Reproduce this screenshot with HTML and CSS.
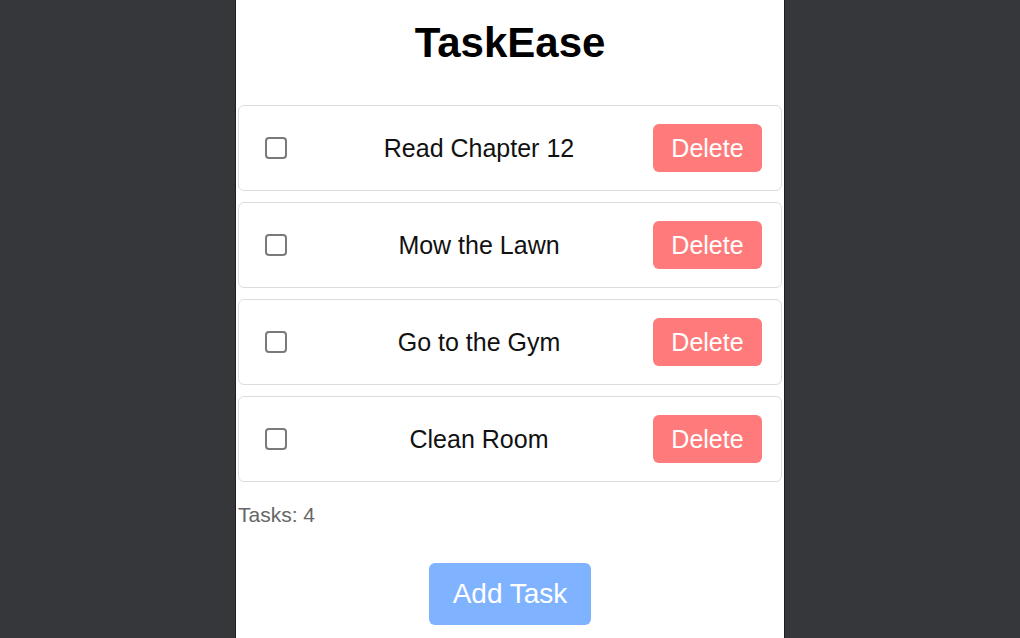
FILE: index.html
```html
<!DOCTYPE html>
<html lang="en">
  <head>
    <meta charset="UTF-8" />
    <meta name="viewport" content="width=device-width, initial-scale=1.0" />
    <title>TaskEase</title>
    <link rel="stylesheet" href="styles.css">
  </head>
  <body>
    <div class="app">
      <h1>TaskEase</h1>

      <ul class="task-list">
        <li class="task">
          <input type="checkbox" class="task-check" />
          <span class="task-name">Read Chapter 12</span>
          <button class="delete-btn">Delete</button>
        </li>
        <li class="task">
          <input type="checkbox" class="task-check" />
          <span class="task-name">Mow the Lawn</span>
          <button class="delete-btn">Delete</button>
        </li>
        <li class="task">
          <input type="checkbox" class="task-check" />
          <span class="task-name">Go to the Gym</span>
          <button class="delete-btn">Delete</button>
        </li>
        <li class="task">
          <input type="checkbox" class="task-check" />
          <span class="task-name">Clean Room</span>
          <button class="delete-btn">Delete</button>
        </li>
      </ul>

      <p class="task-count">Tasks: 4</p>

      <button class="add-btn">Add Task</button>
    </div>
  </body>
</html>
```

FILE: styles.css
```css
html,
body {
  height: 100%;
}
body {
  margin: 0;
  background-color: #36373b;
  font-family: "Liberation Sans", Arial, sans-serif;
  color: #111;
  overflow: hidden;
}
.app {
  width: 544px;
  height: 100%;
  margin: 0 auto;
  padding: 0 2px;
  background-color: #fff;
  border-left: 1px solid #1e1f26;
  border-right: 1px solid #1e1f26;
  text-align: center;
}
h1 {
  margin: 0 0 38px;
  padding-top: 19px;
  font-size: 42px;
  line-height: 48px;
  font-weight: bold;
  color: #000;
}
.task-list {
  list-style: none;
  margin: 0;
  padding: 0;
}
.task {
  display: flex;
  align-items: center;
  height: 84px;
  margin-bottom: 11px;
  padding: 0 19px 0 26px;
  border: 1px solid #dcdcdc;
  border-radius: 6px;
}
.task:last-child {
  margin-bottom: 0;
}
.task-check {
  appearance: none;
  -webkit-appearance: none;
  width: 22px;
  height: 22px;
  margin: 0;
  border: 2px solid #7a7a7a;
  border-radius: 4px;
  background: #fff;
}
.task-name {
  flex: 1;
  margin-left: 18px;
  font-size: 25px;
}
.delete-btn {
  width: 109px;
  height: 48px;
  border: none;
  border-radius: 6px;
  background-color: #ff7b7b;
  color: #fff;
  font-family: inherit;
  font-size: 25px;
  cursor: pointer;
}
.task-count {
  margin: 21px 0 0;
  text-align: left;
  font-size: 21px;
  line-height: 24px;
  color: #666;
}
.add-btn {
  display: block;
  margin: 36px auto 0;
  width: 162px;
  height: 62px;
  border: none;
  border-radius: 6px;
  background-color: #80b3ff;
  color: #fff;
  font-family: inherit;
  font-size: 28px;
  cursor: pointer;
}
```
